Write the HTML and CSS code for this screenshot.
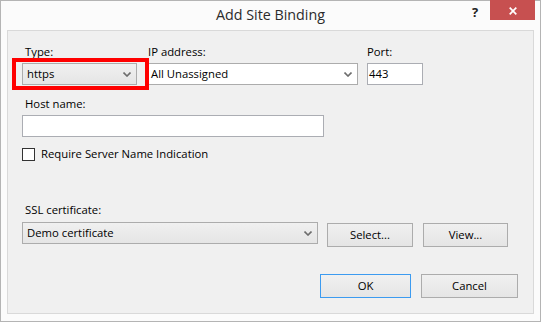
FILE: index.html
```html
<!DOCTYPE html>
<html>
<head>
<meta charset="utf-8">
<link rel="stylesheet" href="styles.css">
</head>
<body>
<div class="window">
  <div class="titlebar">
    <div class="tb-side"></div>
    <div class="title">Add Site Binding</div>
    <div class="tb-side tb-right">
      <div class="help">?</div>
      <div class="close"><svg width="8" height="8" viewBox="0 0 8 8"><path d="M0.7 0.7 L7.3 7.3 M7.3 0.7 L0.7 7.3" stroke="#fff" stroke-width="1.7" fill="none"/></svg></div>
    </div>
  </div>
  <div class="client">
    <div class="row-top">
      <div class="field f-type">
        <div class="label indent">Type:</div>
        <div class="combo gray"><span>https</span><svg class="chev" width="8" height="5" viewBox="0 0 8 5"><path d="M0.5 0.5 L4 4 L7.5 0.5" stroke="#6d6d6d" stroke-width="1.6" fill="none"/></svg></div>
      </div>
      <div class="field f-ip">
        <div class="label">IP address:</div>
        <div class="combo white"><span>All Unassigned</span><svg class="chev" width="8" height="5" viewBox="0 0 8 5"><path d="M0.5 0.5 L4 4 L7.5 0.5" stroke="#6d6d6d" stroke-width="1.6" fill="none"/></svg></div>
      </div>
      <div class="field f-port">
        <div class="label">Port:</div>
        <div class="textbox">443</div>
      </div>
    </div>
    <div class="field f-host">
      <div class="label indent">Host name:</div>
      <div class="textbox host"></div>
    </div>
    <div class="check">
      <span class="box"></span>
      <span class="check-label">Require Server Name Indication</span>
    </div>
    <div class="field f-ssl">
      <div class="label indent">SSL certificate:</div>
      <div class="ssl-row">
        <div class="combo gray ssl"><span>Demo certificate</span><svg class="chev" width="8" height="5" viewBox="0 0 8 5"><path d="M0.5 0.5 L4 4 L7.5 0.5" stroke="#6d6d6d" stroke-width="1.6" fill="none"/></svg></div>
        <div class="btn btn-select">Select...</div>
        <div class="btn btn-view">View...</div>
      </div>
    </div>
    <div class="footer">
      <div class="btn btn-ok">OK</div>
      <div class="btn btn-cancel">Cancel</div>
    </div>
    <div class="highlight"></div>
  </div>
</div>
</body>
</html>
```

FILE: styles.css
```css
* { box-sizing: border-box; }
html, body { margin: 0; padding: 0; }
body {
  width: 541px;
  height: 322px;
  font-family: "Open Sans", "Noto Sans", "Liberation Sans", sans-serif;
  font-size: 11.3px;
  color: #000;
  background: #fff;
}
.window {
  width: 541px;
  height: 322px;
  border: 1px solid #b4b4b4;
  background: #fbfbfb;
  display: flex;
  flex-direction: column;
}
.titlebar {
  height: 29px;
  display: grid;
  grid-template-columns: 1fr auto 1fr;
  align-items: start;
}
.title {
  font-size: 14.3px;
  line-height: 28px;
  color: #2b2b2b;
}
.tb-right {
  display: flex;
  justify-content: flex-end;
  padding-right: 5px;
}
.help {
  width: 30px;
  text-align: center;
  font-weight: bold;
  font-size: 13px;
  line-height: 22px;
  color: #222;
}
.close {
  width: 45px;
  height: 20px;
  margin-top: -1px;
  background: #c75050;
  display: flex;
  align-items: center;
  justify-content: center;
}
.close svg { margin-top: 1px; }
.client {
  position: relative;
  margin: 0 6px;
  height: 284px;
  border: 1px solid #d9d9d9;
  background: #f0f0f0;
  padding: 13px 0 0 14px;
}
.label {
  line-height: 15px;
  height: 15px;
  margin-bottom: 4px;
  white-space: nowrap;
}
.label.indent { padding-left: 3px; }
.row-top { display: flex; }
.f-type { width: 115px; }
.f-ip { width: 210px; margin-left: 11px; }
.f-port { width: 56px; margin-left: 9px; }
.combo {
  height: 22px;
  border: 1px solid #acacac;
  display: flex;
  align-items: center;
  justify-content: space-between;
  padding: 0 5px 0 4px;
  line-height: 20px;
  white-space: nowrap;
}
.combo.gray { background: linear-gradient(#f0f0f0, #e5e5e5); }
.combo.white { background: #fff; padding-left: 2px; }
.chev { flex: none; margin-top: 1px; }
.textbox {
  height: 22px;
  border: 1px solid #abadb3;
  background: #fff;
  line-height: 20px;
  padding-left: 1px;
}
.f-host { margin-top: 11px; }
.textbox.host { width: 302px; }
.check {
  margin-top: 11px;
  display: flex;
  align-items: center;
  height: 13px;
}
.box {
  width: 13px;
  height: 13px;
  border: 1px solid #333;
  background: #fff;
  flex: none;
}
.check-label { margin-left: 6px; line-height: 15px; margin-top: -2px; }
.f-ssl { margin-top: 41px; }
.f-ssl .label { margin-bottom: 5px; }
.ssl-row { display: flex; align-items: flex-start; }
.combo.ssl { width: 296px; }
.btn {
  height: 24px;
  border: 1px solid #acacac;
  background: linear-gradient(#f0f0f0, #e5e5e5);
  text-align: center;
  line-height: 22px;
  white-space: nowrap;
}
.btn-select { width: 86px; margin-left: 9px; margin-top: 1px; }
.btn-view { width: 85px; margin-left: 10px; margin-top: 1px; }
.footer {
  display: flex;
  justify-content: flex-end;
  margin-top: 27px;
  padding-right: 15px;
}
.btn-ok { width: 91px; border-color: #3c9bf0; }
.btn-cancel { width: 97px; margin-left: 10px; }
.highlight {
  position: absolute;
  left: 4px;
  top: 27px;
  width: 137px;
  height: 32px;
  border: 4px solid #f00;
}
```
